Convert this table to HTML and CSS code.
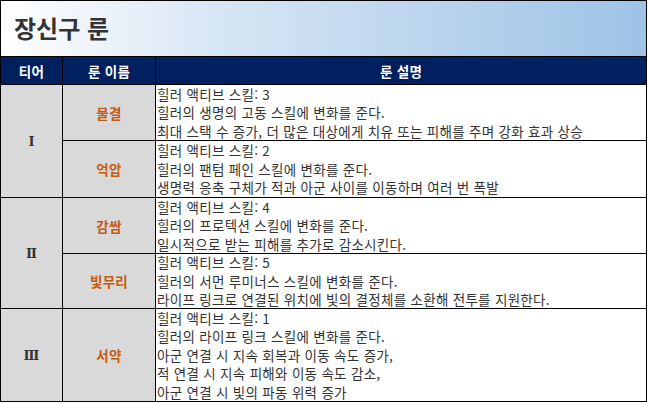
FILE: index.html
```html
<!DOCTYPE html>
<html lang="ko">
<head>
<meta charset="utf-8">
<title>장신구 룬</title>
<link rel="stylesheet" href="styles.css">
</head>
<body>
<div class="sheet">
  <div class="title">장신구 룬</div>
  <div class="head">티어</div>
  <div class="head">룬 이름</div>
  <div class="head">룬 설명</div>

  <div class="tier t1">Ⅰ</div>
  <div class="name">물결</div>
  <div class="desc">힐러 액티브 스킬: 3<br>힐러의 생명의 고동 스킬에 변화를 준다.<br>최대 스택 수 증가, 더 많은 대상에게 치유 또는 피해를 주며 강화 효과 상승</div>
  <div class="name">억압</div>
  <div class="desc">힐러 액티브 스킬: 2<br>힐러의 팬텀 페인 스킬에 변화를 준다.<br>생명력 응축 구체가 적과 아군 사이를 이동하며 여러 번 폭발</div>

  <div class="tier t2">Ⅱ</div>
  <div class="name">감쌈</div>
  <div class="desc">힐러 액티브 스킬: 4<br>힐러의 프로텍션 스킬에 변화를 준다.<br>일시적으로 받는 피해를 추가로 감소시킨다.</div>
  <div class="name">빛무리</div>
  <div class="desc">힐러 액티브 스킬: 5<br>힐러의 서먼 루미너스 스킬에 변화를 준다.<br>라이프 링크로 연결된 위치에 빛의 결정체를 소환해 전투를 지원한다.</div>

  <div class="tier t3">Ⅲ</div>
  <div class="name">서약</div>
  <div class="desc">힐러 액티브 스킬: 1<br>힐러의 라이프 링크 스킬에 변화를 준다.<br>아군 연결 시 지속 회복과 이동 속도 증가,<br>적 연결 시 지속 피해와 이동 속도 감소,<br>아군 연결 시 빛의 파동 위력 증가</div>
</div>
</body>
</html>
```

FILE: styles.css
```css
html, body {
  margin: 0;
  padding: 0;
  background: #ffffff;
}

.sheet {
  width: 645px;
  display: grid;
  grid-template-columns: 61px 92px 490px;
  grid-template-rows: 55px 27px 55px 56px 55px 54px 92px;
  gap: 1px;
  padding: 1px;
  background: #000000;
  font-family: "Noto Sans CJK KR", "Noto Sans", sans-serif;
  font-size: 13.5px;
  letter-spacing: 0.3px;
  color: #333333;
}

.title {
  grid-column: 1 / 4;
  background: linear-gradient(to right, #ffffff 0%, #d6e5f4 35%, #9dc3e6 100%);
  font-size: 24px;
  letter-spacing: 0;
  font-weight: 700;
  color: #333333;
  padding-left: 13px;
  display: flex;
  align-items: center;
  padding-bottom: 3px;
  box-sizing: border-box;
}

.head {
  background: #002060;
  color: #ffffff;
  font-weight: 700;
  display: flex;
  align-items: center;
  justify-content: center;
}

.tier {
  grid-column: 1;
  background: #d9d9d9;
  font-family: "DejaVu Serif", "Liberation Serif", serif;
  font-weight: 700;
  font-size: 13px;
  letter-spacing: 0;
  color: #333333;
  display: flex;
  align-items: center;
  justify-content: center;
}

.t1 { grid-row: 3 / 5; }
.t2 { grid-row: 5 / 7; }
.t3 { grid-row: 7 / 8; }

.name {
  grid-column: 2;
  background: #d9d9d9;
  color: #c55a11;
  font-weight: 700;
  display: flex;
  align-items: center;
  justify-content: center;
}

.desc {
  grid-column: 3;
  background: #ffffff;
  line-height: 18.4px;
  padding-left: 1px;
  display: flex;
  align-items: center;
  white-space: nowrap;
}
```
